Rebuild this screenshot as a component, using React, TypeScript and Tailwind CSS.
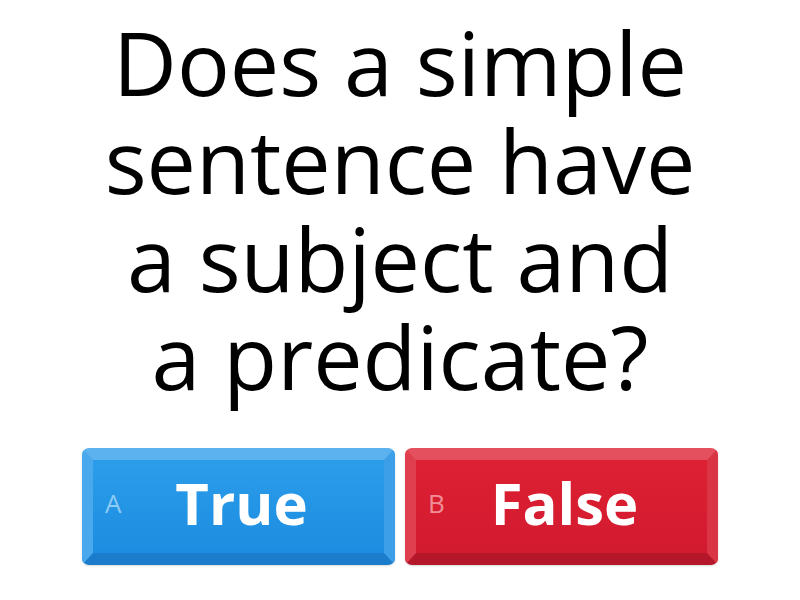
const answers = [
  {
    key: 'A',
    label: 'True',
    face: 'bg-gradient-to-b from-[#2b9dea] to-[#1c8de0]',
    bevel: 'border-t-[#5cb1ef] border-l-[#4aa8ec] border-r-[#3c9fe8] border-b-[#1a7ccb]',
    keyColor: 'text-[#8ecbf5]',
  },
  {
    key: 'B',
    label: 'False',
    face: 'bg-gradient-to-b from-[#de2034] to-[#d21a2e]',
    bevel: 'border-t-[#e5505e] border-l-[#e03f50] border-r-[#d93545] border-b-[#b5172a]',
    keyColor: 'text-[#f08d97]',
  },
]

export default function App() {
  return (
    <div
      className="w-[800px] h-[600px] bg-white flex flex-col items-center"
      style={{ fontFamily: '"Open Sans", "Noto Sans", sans-serif' }}
    >
      <h1 className="mt-[13px] w-[600px] text-center text-[88px] leading-[98px] font-normal text-black">
        Does a simple sentence have a subject and a predicate?
      </h1>

      <div className="mt-[43px] flex gap-[10px]">
        {answers.map((a) => (
          <button
            key={a.key}
            className={`w-[313px] h-[117px] rounded-[7px] border-t-[12px] border-b-[12px] border-x-[11px] ${a.bevel} ${a.face} flex items-center pb-[8px] shadow-[0_1px_2px_rgba(0,0,0,0.15)]`}
          >
            <span className={`w-[30px] pl-[12px] text-left text-[26px] leading-none ${a.keyColor}`}>
              {a.key}
            </span>
            <span className="flex-1 pr-[24px] text-center text-[58px] leading-none font-bold text-white">
              {a.label}
            </span>
          </button>
        ))}
      </div>
    </div>
  )
}
